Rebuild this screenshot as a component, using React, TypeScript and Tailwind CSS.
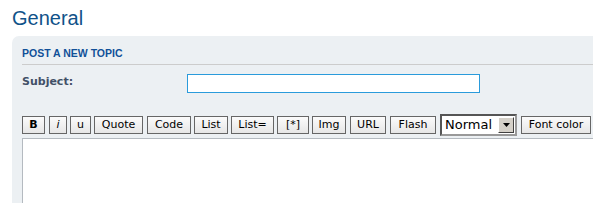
const buttons = [
    { label: "B", w: "w-[23px]", cls: "font-bold" },
    { label: "i", w: "w-[18px] ml-[4px]", cls: "italic" },
    { label: "u", w: "w-[21px] ml-[3px]", cls: "" },
    { label: "Quote", w: "w-[49px] ml-[3px]", cls: "" },
    { label: "Code", w: "w-[44px] ml-[4px]", cls: "" },
    { label: "List", w: "w-[34px] ml-[3px]", cls: "" },
    { label: "List=", w: "w-[43px] ml-[3px]", cls: "" },
    { label: "[*]", w: "w-[32px] ml-[3px]", cls: "" },
    { label: "Img", w: "w-[34px] ml-[3px]", cls: "" },
    { label: "URL", w: "w-[36px] ml-[4px]", cls: "" },
    { label: "Flash", w: "w-[46px] ml-[4px]", cls: "" },
];

const btnStyles = "h-[18px] border border-[#666666] bg-gradient-to-b from-[#fbfbfb] to-[#e6e6e6] text-[11px] leading-[16px] text-black flex items-center justify-center shrink-0"

export default function App() {
    return (
        <div className="w-[593px] h-[203px] overflow-hidden bg-white pl-[12px] font-['DejaVu_Sans',Verdana,sans-serif]">
            <h2 className="pt-[5px] h-[36px] text-[20px] leading-[26px] text-[#105289] font-['Liberation_Sans',Arial,sans-serif]">
                General
            </h2>

            <div className="w-[620px] h-[200px] bg-[#ecf0f3] rounded-tl-[7px] pl-[10px] pt-[11px]">
                {/* Titulo del panel */}
                <h3 className="w-[600px] border-b border-[#cccccc] pb-[5px] text-[10.5px] leading-[12px] font-bold text-[#115098] uppercase font-['Liberation_Sans',Arial,sans-serif]">
                    Post a new topic
                </h3>

                {/* Asunto */}
                <div className="flex items-start mt-[9px] h-[40px]">
                    <label className="w-[165px] text-[11px] leading-[13px] font-bold text-[#425067] pt-[1px]">
                        Subject:
                    </label>
                    <input
                        type="text"
                        className="w-[293px] h-[19px] border border-[#2a9bdb] bg-white outline-none"
                    />
                </div>

                {/* Botones */}
                <div className="flex items-center h-[22px]">
                    {buttons.map((b) => (
                        <div key={b.label} className={`${btnStyles} ${b.w} ${b.cls}`}>
                            {b.label}
                        </div>
                    ))}
                    <div className="ml-[4px] w-[77px] h-[22px] border-2 border-[#555555] border-r-[#999999] border-b-[#999999] bg-white flex items-center shrink-0">
                        <span className="flex-1 pl-[3px] text-[13px] leading-[16px] text-black">Normal</span>
                        <div className="w-[16px] h-[16px] mr-[1px] bg-[#d4d0c8] border border-t-white border-l-white border-r-[#404040] border-b-[#404040] flex items-center justify-center">
                            <svg width="7" height="4" viewBox="0 0 7 4"><path d="M0 0h7L3.5 4z" fill="#000" /></svg>
                        </div>
                    </div>
                    <div className={`${btnStyles} w-[70px] ml-[4px]`}>Font color</div>
                </div>

                {/* Area de texto */}
                <div className="mt-[2px] w-[600px] h-[80px] border border-[#b4bac0] bg-white"></div>
            </div>
        </div>
    )
}
